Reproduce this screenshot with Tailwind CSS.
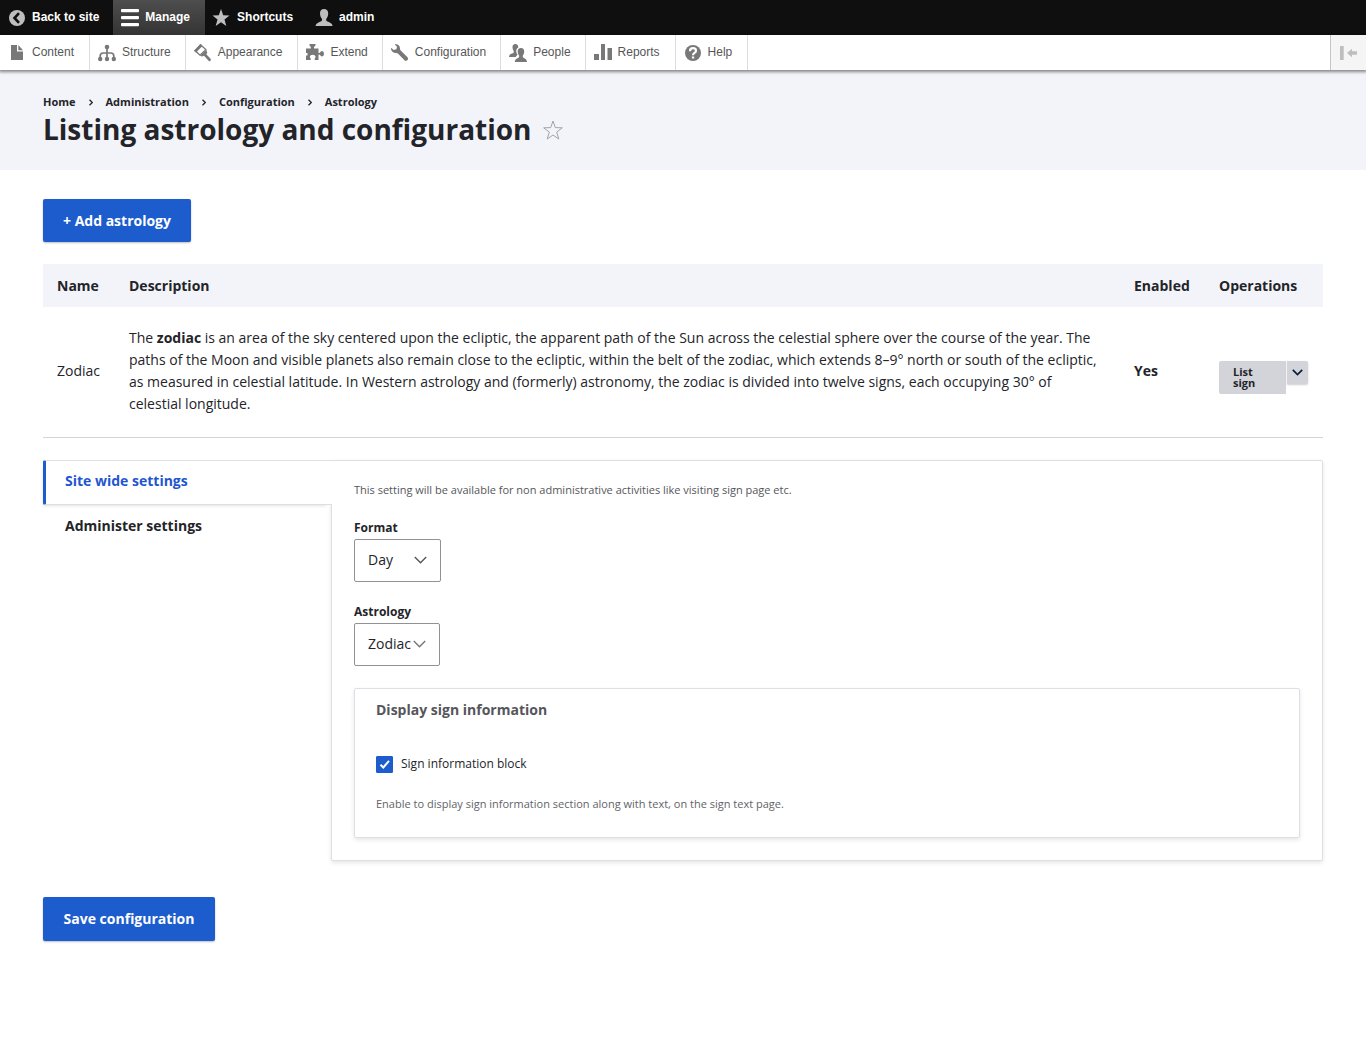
<!DOCTYPE html>
<html lang="en">
<head>
    <meta charset="UTF-8">
    <meta name="viewport" content="width=device-width, initial-scale=1.0">
    <title>Listing astrology and configuration</title>
    <script src="https://cdn.jsdelivr.net/npm/@tailwindcss/browser@4"></script>
</head>
<body class="bg-white text-[#232429] text-sm font-['Open_Sans',sans-serif]">
    <!-- toolbar -->
    <div class="relative font-['Liberation_Sans',sans-serif] text-[12px]">
        <nav class="flex h-[35px] bg-[#0f0f0f] font-bold text-white">
            <a href="#" class="flex items-center gap-[6px] pl-2 pr-[14px]">
                <svg class="w-[18px] h-[18px]" viewBox="0 0 18 18"><circle cx="9" cy="9" r="8" fill="#bebebe"/><path d="M11 4.2 6.500 9l4.500 4.800" fill="none" stroke="#0f0f0f" stroke-width="2.600"/></svg>
                Back to site
            </a>
            <a href="#" class="flex items-center gap-[6px] pl-2 pr-[15px] bg-linear-to-b from-[#4e4e4e] to-[#343434]">
                <svg class="w-[18px] h-[18px]" viewBox="0 0 18 18" fill="#fff"><rect width="18" height="3.300" rx="1"/><rect y="7" width="18" height="3.300" rx="1"/><rect y="14" width="18" height="3.300" rx="1"/></svg>
                Manage
            </a>
            <a href="#" class="flex items-center gap-[6px] pl-2 pr-[14px]">
                <svg class="w-[18px] h-[18px] overflow-visible" viewBox="0 0 18 18" fill="#bebebe"><path d="m8 0 2.200 6.200 6.300.2-5 4 1.800 6.600L8 13.200 2.700 17l1.800-6.600-5-4 6.300-.2z"/></svg>
                Shortcuts
            </a>
            <a href="#" class="flex items-center gap-[6px] pl-2 pr-[15px]">
                <svg class="w-[18px] h-[18px]" viewBox="0 0 18 18" fill="#bebebe"><path d="M9 0C6.300 0 5 1.900 5 4.300c0 2.200.8 4.400 1.900 5.400.3.900.1 2-.6 2.500C5 13 1 13.500.600 17h17c-.4-3.500-4.400-4-5.700-4.800-.7-.5-.9-1.600-.6-2.500 1.100-1 1.900-3.200 1.900-5.400C13.200 1.900 11.800 0 9 0z"/></svg>
                admin
            </a>
        </nav>
        <nav class="flex h-[35px] bg-white text-[#565656] shadow-[0_1px_3px_1px_rgba(0,0,0,0.45)]">
            <a href="#" class="flex items-center gap-[6px] pl-2 pr-[15px] border-r border-[#ddd]">
                <svg class="w-[18px] h-[18px]" viewBox="0 0 18 18" fill="#787878"><path d="M3 1h6v6.500h6V16H3z"/><path d="M10.300 1 15 6.200h-4.700z"/></svg>
                Content
            </a>
            <a href="#" class="flex items-center gap-[6px] pl-2 pr-[14px] border-r border-[#ddd]">
                <svg class="w-[18px] h-[18px]" viewBox="0 0 18 18" fill="#787878"><circle cx="9" cy="3" r="2.300"/><circle cx="2.200" cy="15" r="2.200"/><circle cx="9" cy="15" r="2.200"/><circle cx="15.800" cy="15" r="2.200"/><path d="M9 4v11M2.200 15v-3q0-3 3-3h7.600q3 0 3 3v3" fill="none" stroke="#787878" stroke-width="1.700"/></svg>
                Structure
            </a>
            <a href="#" class="flex items-center gap-[6px] pl-2 pr-[15px] border-r border-[#ddd]">
                <svg class="w-[18px] h-[18px]" viewBox="0 0 18 18"><path d="M6.500.8 1 6.600l5 4.600 5.800-5.600z" fill="#fff" stroke="#787878" stroke-width="1.300"/><path d="M6.700 0 0 6.800l2 1.800L8.500 2z" fill="#787878"/><path d="m6 11.800 6.300-6 1 3.200-1 1.200 4.500 4.800q.5 1.500-1 2.200-.7.100-1.200-.5L10 11.700l-2 .8z" fill="#787878"/></svg>
                Appearance
            </a>
            <a href="#" class="flex items-center gap-[6px] pl-2 pr-[14px] border-r border-[#ddd]">
                <svg class="w-[18px] h-[18px]" viewBox="0 0 18 18" fill="#787878"><path d="M0 4.500h4.800V3L3.500 1.500V0h6v1.500L8 3v1.500h4.500V9l1.500-.3q.5-1.700 2-1.700 2 .3 2 2.800T16 12.500q-1.500 0-2-1.700l-1.500-.3V16H8.700v-1.500l1-1.500q-.4-2.200-3-2.200t-3 2.200l1 1.500V16H0v-4.500h1.500V9H0z"/></svg>
                Extend
            </a>
            <a href="#" class="flex items-center gap-[6px] pl-2 pr-[14px] border-r border-[#ddd]">
                <svg class="w-[18px] h-[18px]" viewBox="0 0 18 18" fill="#787878"><path d="M3.700.5C6.500-.6 9.300 1.600 9 4.900q0 .9.700 1.700l6.800 6.700q1.100 1.400 0 2.800-1.500 1.500-3 .2L6.900 9.600Q6 8.800 5 9 1.300 9.200.1 5.600V3.700L2.600 6 5.400 5.200 6 2.700z"/></svg>
                Configuration
            </a>
            <a href="#" class="flex items-center gap-[6px] pl-2 pr-[14px] border-r border-[#ddd]">
                <svg class="w-[18px] h-[18px]" viewBox="0 0 18 18" fill="#787878"><path d="M6.500 0C4.300 0 3.400 1.500 3.500 3.500c.1 1.500.6 2.800 1.200 3.500.3 1.600-.2 2-1.700 2.600C1 10.300.200 11 0 13h6.600l2-2.500C7 9 6.800 6 8 4.400l1.300-.9C9.300 1.300 8.300 0 6.500 0z"/><path d="M12 4c-2.500 0-3.400 1.700-3.300 3.800.1 1.600.7 2.900 1.400 3.700.3 1.500-.2 2.200-1.500 2.700C7 14.900 6 15.600 5.800 18H18c-.3-2.400-1.200-3.100-2.700-3.800-1.300-.5-1.800-1.200-1.500-2.700.7-.8 1.300-2.100 1.400-3.700C15.300 5.700 14.300 4 12 4z"/></svg>
                People
            </a>
            <a href="#" class="flex items-center gap-[6px] pl-2 pr-[15px] border-r border-[#ddd]">
                <svg class="w-[18px] h-[18px]" viewBox="0 0 18 18" fill="#787878"><path d="M0 10h5v6H0zM7 0h4v16H7zM13.500 4h4.500v12h-4.500z"/></svg>
                Reports
            </a>
            <a href="#" class="flex items-center gap-[6px] pl-2 pr-[15px] border-r border-[#ddd]">
                <svg class="w-[18px] h-[18px]" viewBox="0 0 18 18"><circle cx="9" cy="9" r="8" fill="#787878"/><path d="M6 7.200q0-3 3-3t3 2.500q0 1.300-1.500 2.200T9 11.300" fill="none" stroke="#fff" stroke-width="2.200"/><path d="M7.900 12.500h2.300v2H7.900z" fill="#fff"/></svg>
                Help
            </a>
            <button type="button" aria-label="Vertical orientation" class="ml-auto w-9 flex items-center justify-center border-l border-[#c5c5c5] bg-[#f5f5f5]">
                <svg class="w-[18px] h-[16px]" viewBox="0 0 18 16" fill="#bebebe"><rect width="3.700" height="14" x="0" y="1" rx=".6"/><path d="m7 8 5-4.200v2.400h5v3.600h-5v2.400z"/></svg>
            </button>
        </nav>
    </div>

    <!-- page title -->
    <header class="h-[100px] bg-[#f3f4f9] px-[43px] pt-6">
        <nav class="flex items-center gap-[13px] h-4 text-[11px] font-bold">
            <a href="#">Home</a>
            <svg class="w-[4px] h-[7px]" viewBox="0 0 4 7" fill="none" stroke="#232429" stroke-width="1.300"><path d="m.5.8 2.800 2.700L.5 6.200"/></svg>
            <a href="#">Administration</a>
            <svg class="w-[4px] h-[7px]" viewBox="0 0 4 7" fill="none" stroke="#232429" stroke-width="1.300"><path d="m.5.8 2.800 2.700L.5 6.200"/></svg>
            <a href="#">Configuration</a>
            <svg class="w-[4px] h-[7px]" viewBox="0 0 4 7" fill="none" stroke="#232429" stroke-width="1.300"><path d="m.5.8 2.800 2.700L.5 6.200"/></svg>
            <a href="#">Astrology</a>
        </nav>
        <div class="flex items-center gap-[11px]">
            <h1 class="text-[28px] leading-[38px] font-bold">Listing astrology and configuration</h1>
            <a href="#" aria-label="Add to shortcuts">
                <svg class="w-5 h-5 mt-0.5" viewBox="0 0 20 20" fill="none" stroke="#a2a3a8" stroke-width="1"><path d="m10 1 2.300 6.600 7 .2-5.600 4.300 2.100 6.900L10 15l-5.800 4 2.100-6.900L.7 7.800l7-.2z"/></svg>
            </a>
        </div>
    </header>

    <main class="px-[43px] pt-[29px]">
        <a href="#" class="inline-flex items-center justify-center h-[43px] w-[148px] rounded-xs bg-[#1c5ccd] font-bold text-white shadow-[0_1px_2px_rgba(0,0,0,0.25)]">+ Add astrology</a>

        <table class="w-full mt-[22px] text-left">
            <thead>
                <tr class="h-[43px] bg-[#f3f4f9]">
                    <th class="w-[72px] pl-[14px]">Name</th>
                    <th class="pl-[14px]">Description</th>
                    <th class="w-[85px] pl-[14px]">Enabled</th>
                    <th class="w-[118px] pl-[14px]">Operations</th>
                </tr>
            </thead>
            <tbody>
                <tr class="border-b border-[#d3d4d9]">
                    <td class="pl-[14px] pb-0.5">Zodiac</td>
                    <td class="px-[14px] pt-5 pb-[22px] leading-[22px]">The <b>zodiac</b> is an area of the sky centered upon the ecliptic, the apparent path of the Sun across the celestial sphere over the course of the year. The paths of the Moon and visible planets also remain close to the ecliptic, within the belt of the zodiac, which extends 8–9° north or south of the ecliptic, as measured in celestial latitude. In Western astrology and (formerly) astronomy, the zodiac is divided into twelve signs, each occupying 30° of celestial longitude.</td>
                    <td class="pl-[14px] pb-0.5 font-bold">Yes</td>
                    <td class="pl-[14px]">
                        <div class="flex items-start gap-px h-[23px]">
                            <a href="#" class="w-[67px] h-[33px] pt-[5px] pl-[14px] pr-5 rounded-l-xs bg-[#d3d4d9] text-[11px] leading-[11px] font-bold">List sign</a>
                            <button type="button" aria-label="List additional actions" class="w-[21px] h-[23px] flex items-center justify-center rounded-r-xs bg-[#d3d4d9] shadow-[0_1px_2px_rgba(0,0,0,0.2)]">
                                <svg class="w-[11px] h-[7px]" viewBox="0 0 11 7" fill="none" stroke="#0b1c40" stroke-width="1.700"><path d="m.8.800 4.700 4.700L10.200.800"/></svg>
                            </button>
                        </div>
                    </td>
                </tr>
            </tbody>
        </table>

        <form>
            <!-- vertical tabs -->
            <div class="flex mt-[22px]">
                <ul class="w-[289px] shrink-0 font-bold">
                    <li class="relative z-10 h-[45px] border-t border-b border-[#dedfe4] border-l-[3px] border-l-[#1c5ccd] rounded-l-xs bg-white shadow-[-3px_4px_3px_-3px_rgba(0,0,0,0.12)]">
                        <a href="#" class="flex items-center h-[39px] pl-[19px] text-[#1f56d0]">Site wide settings</a>
                    </li>
                    <li><a href="#" class="flex items-center h-[41px] pl-[22px]">Administer settings</a></li>
                </ul>
                <div class="grow -ml-px px-[22px] pt-5 pb-[22px] border border-[#dedfe4] rounded-xs shadow-[0_2px_4px_rgba(0,0,0,0.1)]">
                    <p class="text-[11px] leading-[18px] text-[#55565b]">This setting will be available for non administrative activities like visiting sign page etc.</p>

                    <label for="format" class="block mt-5 leading-[18px] text-[12px] font-bold">Format</label>
                    <div class="relative w-[87px] mt-[2px]">
                        <select id="format" class="appearance-none w-full h-[43px] pl-[13px] pb-0.5 border border-[#919297] rounded-xs bg-white">
                            <option>Day</option>
                        </select>
                        <svg class="absolute right-[14px] top-[17px] w-[13px] h-2 pointer-events-none" viewBox="0 0 13 8" fill="none" stroke="#55565b" stroke-width="1.400"><path d="m.8 1 5.700 5.700L12.200 1"/></svg>
                    </div>

                    <label for="astrology" class="block mt-[21px] leading-[18px] text-[12px] font-bold">Astrology</label>
                    <div class="relative w-[86px] mt-[2px]">
                        <select id="astrology" class="appearance-none w-full h-[43px] pl-[13px] pb-0.5 border border-[#919297] rounded-xs bg-white">
                            <option>Zodiac</option>
                        </select>
                        <svg class="absolute right-[14px] top-[17px] w-[13px] h-2 pointer-events-none" viewBox="0 0 13 8" fill="none" stroke="#74757a" stroke-width="1.400"><path d="m.8 1 5.700 5.700L12.200 1"/></svg>
                    </div>

                    <fieldset class="mt-[22px] px-[21px] pt-[11px] pb-6 border border-[#dedfe4] rounded-xs shadow-[0_2px_4px_rgba(0,0,0,0.1)]">
                        <h2 class="leading-5 font-bold text-[#55565b]">Display sign information</h2>
                        <div class="flex items-center gap-2 mt-[35px]">
                            <div class="grid">
                                <input type="checkbox" id="sign_block" checked class="appearance-none col-start-1 row-start-1 w-[17px] h-[17px] rounded-[1px] border border-[#8e929c] checked:border-[#1c5ccd] checked:bg-[#1c5ccd]">
                                <svg class="col-start-1 row-start-1 w-[17px] h-[17px] pointer-events-none" viewBox="0 0 17 17" fill="none" stroke="#fff" stroke-width="2"><path d="m4.500 8.800 2.800 2.700L13 4.800"/></svg>
                            </div>
                            <label for="sign_block" class="text-[12px] leading-[18px]">Sign information block</label>
                        </div>
                        <p class="mt-[22px] text-[11px] leading-[18px] text-[#626368]">Enable to display sign information section along with text, on the sign text page.</p>
                    </fieldset>
                </div>
            </div>
            <button type="submit" class="mt-9 mb-4 h-11 w-[172px] rounded-xs bg-[#1c5ccd] font-bold text-white shadow-[0_1px_2px_rgba(0,0,0,0.25)]">Save configuration</button>
        </form>
    </main>
</body>
</html>
